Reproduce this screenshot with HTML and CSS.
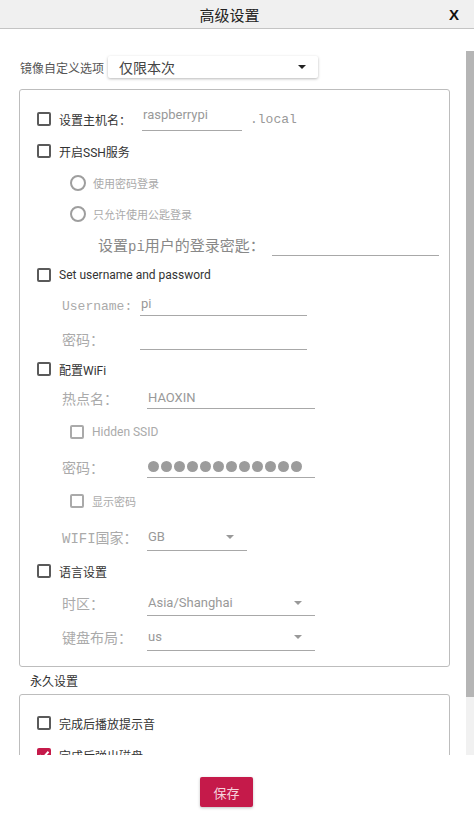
FILE: index.html
```html
<!DOCTYPE html>
<html lang="zh-CN">
<head>
  <meta charset="UTF-8">
  <title>高级设置</title>
  <link rel="stylesheet" href="styles.css">
</head>
<body>
  <div class="dialog">
    <header class="titlebar">
      <span></span>
      <span class="title">高级设置</span>
      <span class="close">X</span>
    </header>

    <div class="body">
      <div class="scroll">
        <div class="select-row">
          <span class="select-label">镜像自定义选项</span>
          <div class="main-select">
            <span>仅限本次</span>
            <span class="arrow dark"></span>
          </div>
        </div>

        <div class="box">
          <div class="row h32">
            <span class="cb"></span>
            <span class="label host-label">设置主机名：</span>
            <span class="input w100 h24 top"><span class="value">raspberrypi</span></span>
            <span class="suffix">.local</span>
          </div>

          <div class="row h32">
            <span class="cb"></span>
            <span class="label">开启SSH服务</span>
          </div>

          <div class="row h32 indent-radio">
            <span class="radio"></span>
            <span class="label small muted">使用密码登录</span>
          </div>

          <div class="row h30 indent-radio">
            <span class="radio"></span>
            <span class="label small muted">只允许使用公匙登录</span>
          </div>

          <div class="row h31 indent-key">
            <span class="key-label">设置<span class="mono">pi</span>用户的登录密匙：</span>
            <span class="input w167 h22"></span>
          </div>

          <div class="row h30">
            <span class="cb"></span>
            <span class="label">Set username and password</span>
          </div>

          <div class="row h32 indent-field">
            <span class="flabel wa mono-label">Username:</span>
            <span class="input w167 h20 top"><span class="value">pi</span></span>
          </div>

          <div class="row h33 indent-field">
            <span class="flabel wa">密码：</span>
            <span class="input w167 h22"></span>
          </div>

          <div class="row h28">
            <span class="cb"></span>
            <span class="label">配置WiFi</span>
          </div>

          <div class="row h30 indent-field">
            <span class="flabel wb">热点名：</span>
            <span class="input w168 h22"><span class="value">HAOXIN</span></span>
          </div>

          <div class="row h38 indent-radio">
            <span class="cb muted-cb"></span>
            <span class="label muted">Hidden SSID</span>
          </div>

          <div class="row h32 indent-field">
            <span class="flabel wb">密码：</span>
            <span class="input w168 h22 dots">
              <i></i><i></i><i></i><i></i><i></i><i></i><i></i><i></i><i></i><i></i><i></i><i></i>
            </span>
          </div>

          <div class="row h36 indent-radio">
            <span class="cb muted-cb"></span>
            <span class="label small muted">显示密码</span>
          </div>

          <div class="row h36 indent-field">
            <span class="flabel wb"><span class="mono">WIFI</span>国家：</span>
            <span class="input w100 h28 sel"><span class="value">GB</span><span class="arrow"></span></span>
          </div>

          <div class="row h32">
            <span class="cb"></span>
            <span class="label">语言设置</span>
          </div>

          <div class="row h32 indent-field">
            <span class="flabel wb">时区：</span>
            <span class="input w168 h26 sel"><span class="value">Asia/Shanghai</span><span class="arrow"></span></span>
          </div>

          <div class="row h36 indent-field">
            <span class="flabel wb">键盘布局：</span>
            <span class="input w168 h28 sel"><span class="value">us</span><span class="arrow"></span></span>
          </div>
        </div>

        <div class="section-title">永久设置</div>

        <div class="box box-permanent">
          <div class="row h32">
            <span class="cb"></span>
            <span class="label">完成后播放提示音</span>
          </div>
          <div class="row h32">
            <span class="cb checked">
              <svg viewBox="0 0 14 14" width="14" height="14"><path d="M2.5 7.2 L5.6 10.2 L11.5 3.8" fill="none" stroke="#fff" stroke-width="2"/></svg>
            </span>
            <span class="label">完成后弹出磁盘</span>
          </div>
        </div>
      </div>

      <div class="scrollbar">
        <div class="track"><div class="thumb"></div></div>
      </div>
    </div>

    <footer class="footer">
      <button class="save">保存</button>
    </footer>
  </div>
</body>
</html>
```

FILE: styles.css
```css
body {
  margin: 0;
  font-family: Roboto, "Noto Sans CJK SC", sans-serif;
  background: #fff;
  color: #333;
}

.dialog {
  width: 474px;
  height: 821px;
  display: flex;
  flex-direction: column;
  overflow: hidden;
}

.titlebar {
  height: 28px;
  background: #f0f0f0;
  border-bottom: 1px solid #c4c4c4;
  display: grid;
  grid-template-columns: 1fr auto 1fr;
  align-items: center;
  padding-right: 15px;
}

.title {
  font-size: 15px;
  color: #222;
  font-family: "Noto Sans CJK SC", sans-serif;
}

.close {
  justify-self: end;
  font-family: "Liberation Sans", sans-serif;
  font-weight: bold;
  font-size: 15px;
  color: #111;
}

.body {
  height: 726px;
  display: flex;
  overflow: hidden;
}

.scroll {
  flex: 1;
  padding: 27px 16px 0 19px;
  overflow: hidden;
}

.scrollbar {
  width: 8px;
  padding-top: 22px;
  display: flex;
}

.track {
  flex: 1;
  background: #f1f1f1;
}

.thumb {
  height: 646px;
  background: #b5b5b5;
}

/* select row */
.select-row {
  display: flex;
  align-items: center;
  height: 22px;
  margin-bottom: 11px;
}

.select-label {
  width: 88px;
  margin-left: 1px;
  font-size: 12px;
  color: #555;
  font-family: "Noto Sans CJK SC", sans-serif;
}

.main-select {
  width: 210px;
  height: 22px;
  box-sizing: border-box;
  padding: 0 12px 0 11px;
  display: flex;
  align-items: center;
  justify-content: space-between;
  background: #fff;
  border-radius: 2px;
  box-shadow: 0 1px 3px rgba(0, 0, 0, 0.28);
  font-size: 14px;
  color: #444;
  font-family: "Noto Sans CJK SC", sans-serif;
}

.arrow {
  width: 0;
  height: 0;
  border-left: 4px solid transparent;
  border-right: 4px solid transparent;
  border-top: 4px solid #999;
}

.arrow.dark {
  border-top-color: #222;
}

/* boxes */
.box {
  border: 1px solid #bdbdbd;
  border-radius: 3px;
  padding: 13px 0 11px 17px;
}

.box-permanent {
  padding-top: 12px;
  padding-bottom: 20px;
}

.section-title {
  margin: 5px 0 4px 11px;
  height: 18px;
  line-height: 18px;
  font-size: 12px;
  color: #333;
  font-family: "Noto Sans CJK SC", sans-serif;
}

.row {
  display: flex;
  align-items: center;
}

.h28 { height: 28px; }
.h30 { height: 30px; }
.h31 { height: 31px; }
.h32 { height: 32px; }
.h33 { height: 33px; }
.h36 { height: 36px; }
.h38 { height: 38px; }

.indent-radio { padding-left: 33px; }
.indent-key { padding-left: 61px; }
.indent-field { padding-left: 25px; }

.cb {
  width: 14px;
  height: 14px;
  box-sizing: border-box;
  border: 2px solid #5a5a5a;
  border-radius: 2px;
  margin-right: 8px;
  flex-shrink: 0;
  display: flex;
}

.cb.muted-cb {
  border-color: #aaa;
}

.cb.checked {
  background: #c51a4a;
  border-color: #c51a4a;
}

.cb.checked svg {
  margin: -2px;
}

.radio {
  width: 16px;
  height: 16px;
  box-sizing: border-box;
  border: 2px solid #9e9e9e;
  border-radius: 50%;
  margin-right: 7px;
}

.label {
  font-size: 12px;
  color: #333;
}

.label.small {
  font-size: 11px;
}

.label.muted {
  color: #aaa;
}

.host-label {
  width: 83px;
}

.key-label {
  width: 174px;
  font-size: 15px;
  color: #888;
  font-family: "Noto Sans CJK SC", sans-serif;
}

.mono {
  font-family: "Liberation Mono", monospace;
  font-size: 14px;
}

.flabel {
  font-size: 14px;
  color: #aaa;
  font-family: "Noto Sans CJK SC", sans-serif;
}

.flabel.wa { width: 78px; }
.flabel.wb { width: 85px; }

.flabel.mono-label {
  font-family: "Liberation Mono", monospace;
  font-size: 13px;
}

.input {
  box-sizing: border-box;
  border-bottom: 1px solid #a8a8a8;
  display: flex;
  align-items: center;
  font-size: 13px;
  color: #999;
}

.input.top {
  align-items: flex-start;
}

.w100 { width: 100px; }
.w167 { width: 167px; }
.w168 { width: 168px; }
.h20 { height: 20px; }
.h22 { height: 22px; }
.h24 { height: 24px; }
.h26 { height: 26px; }
.h28 { height: 28px; }

.input .value {
  padding-left: 1px;
}

.input.sel {
  justify-content: space-between;
  padding-right: 13px;
}

.suffix {
  margin-left: 8px;
  font-family: "Liberation Mono", monospace;
  font-size: 13px;
  color: #999;
}

.dots {
  gap: 2px;
  padding-left: 1px;
}

.dots i {
  width: 11px;
  height: 11px;
  border-radius: 50%;
  background: #9c9c9c;
}

/* footer */
.footer {
  flex: 1;
  display: flex;
  justify-content: center;
  align-items: flex-start;
  padding: 22px 21px 0 0;
}

.save {
  width: 53px;
  height: 30px;
  border: none;
  border-radius: 2px;
  background: #c51a4a;
  color: #f6d3dd;
  font-size: 13px;
  font-family: "Noto Sans CJK SC", sans-serif;
  box-shadow: 0 1px 3px rgba(0, 0, 0, 0.25);
  cursor: pointer;
}
```
